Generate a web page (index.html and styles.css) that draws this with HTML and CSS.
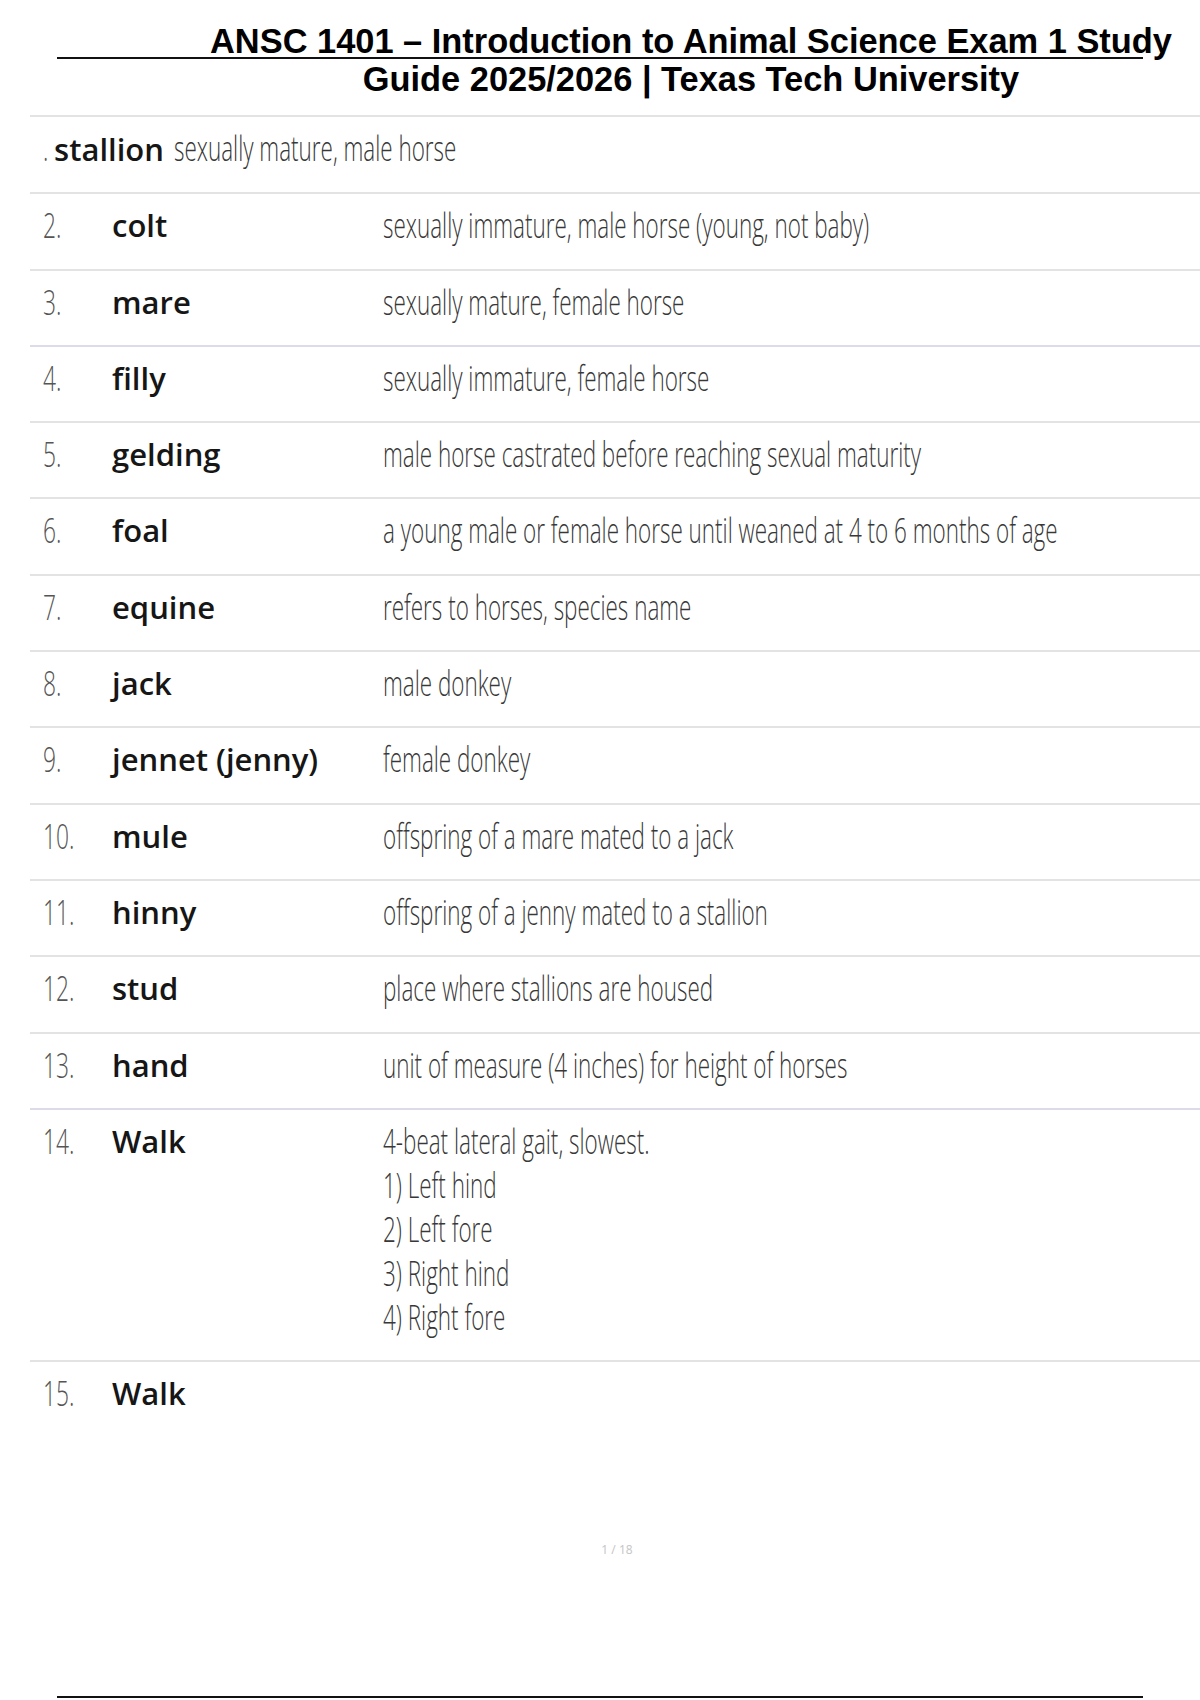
FILE: index.html
```html
<!DOCTYPE html>
<html lang="en">
<head>
<meta charset="utf-8">
<title>ANSC 1401 Study Guide</title>
<link rel="stylesheet" href="styles.css">
</head>
<body>
<div class="page">
  <header class="doc-header">
    <h1 class="doc-title">ANSC 1401 – Introduction to Animal Science Exam 1 Study Guide 2025/2026 | Texas Tech University</h1>
  </header>

  <div class="terms">
    <div class="row row-first">
      <span class="lead-dot">.</span><span class="term">stallion</span><span class="def">sexually mature, male horse</span>
    </div>
    <div class="row"><span class="num">2.</span><span class="term">colt</span><span class="def">sexually immature, male horse (young, not baby)</span></div>
    <div class="row"><span class="num">3.</span><span class="term">mare</span><span class="def">sexually mature, female horse</span></div>
    <div class="row row-tint"><span class="num">4.</span><span class="term">filly</span><span class="def">sexually immature, female horse</span></div>
    <div class="row"><span class="num">5.</span><span class="term">gelding</span><span class="def">male horse castrated before reaching sexual maturity</span></div>
    <div class="row"><span class="num">6.</span><span class="term">foal</span><span class="def">a young male or female horse until weaned at 4 to 6 months of age</span></div>
    <div class="row"><span class="num">7.</span><span class="term">equine</span><span class="def">refers to horses, species name</span></div>
    <div class="row"><span class="num">8.</span><span class="term">jack</span><span class="def">male donkey</span></div>
    <div class="row"><span class="num">9.</span><span class="term">jennet (jenny)</span><span class="def">female donkey</span></div>
    <div class="row"><span class="num">10.</span><span class="term">mule</span><span class="def">offspring of a mare mated to a jack</span></div>
    <div class="row"><span class="num">11.</span><span class="term">hinny</span><span class="def">offspring of a jenny mated to a stallion</span></div>
    <div class="row"><span class="num">12.</span><span class="term">stud</span><span class="def">place where stallions are housed</span></div>
    <div class="row"><span class="num">13.</span><span class="term">hand</span><span class="def">unit of measure (4 inches) for height of horses</span></div>
    <div class="row row-tint">
      <span class="num">14.</span><span class="term">Walk</span>
      <span class="def def-list">
        <span class="def-line">4-beat lateral gait, slowest.</span>
        <span class="def-line">1) Left hind</span>
        <span class="def-line">2) Left fore</span>
        <span class="def-line">3) Right hind</span>
        <span class="def-line">4) Right fore</span>
      </span>
    </div>
    <div class="row"><span class="num">15.</span><span class="term">Walk</span><span class="def"></span></div>
  </div>

  <div class="page-num">1 / 18</div>
  <div class="page-rule"></div>
</div>
</body>
</html>
```

FILE: styles.css
```css
html, body {
  margin: 0;
  padding: 0;
  background: #ffffff;
}

.page {
  width: 1200px;
  min-height: 1700px;
}

.doc-header {
  position: relative;
  padding-top: 22px;
  margin-bottom: 17px;
}

.doc-header::before {
  content: "";
  position: absolute;
  left: 57px;
  width: 1086px;
  top: 57px;
  height: 2px;
  background: #111;
}

.doc-title {
  margin: 0 0 0 190px;
  width: 1002px;
  text-align: center;
  font-family: "Liberation Sans", Arial, sans-serif;
  font-weight: 700;
  font-size: 34.4px;
  line-height: 38px;
  color: #000;
  position: relative;
}

.terms {
  margin-left: 30px;
}

.row {
  display: grid;
  grid-template-columns: 69px 271px 1fr;
  align-items: start;
  border-top: 2px solid #e3e3e3;
  padding: 9px 0 21.3px 13px;
  line-height: 44px;
}

.row-tint {
  border-top-color: #dcdbe9;
}

.row-first {
  display: flex;
  align-items: baseline;
}

.num, .def, .lead-dot {
  font-family: "Open Sans", "Noto Sans", sans-serif;
  font-weight: 300;
  font-size: 34px;
  white-space: nowrap;
  transform: scaleX(0.66);
  transform-origin: left center;
}

.num {
  color: #555;
  transform: scaleX(0.67);
}

.lead-dot {
  display: inline-block;
  color: #555;
  margin-right: 3px;
}

.term {
  font-family: "Open Sans", "Noto Sans", sans-serif;
  font-weight: 600;
  font-size: 31px;
  color: #161616;
}

.row-first .term {
  margin-right: 10px;
}

.row-first .def {
  display: inline-block;
}

.def {
  color: #383838;
}

.def-list {
  display: flex;
  flex-direction: column;
}

.page-num {
  margin-top: 106px;
  padding-left: 34px;
  text-align: center;
  font-family: "Noto Sans", sans-serif;
  font-size: 12px;
  line-height: 16px;
  color: #c8c8c8;
}

.page-rule {
  margin: 138px 57px 0 57px;
  border-top: 2px solid #111;
}
```
